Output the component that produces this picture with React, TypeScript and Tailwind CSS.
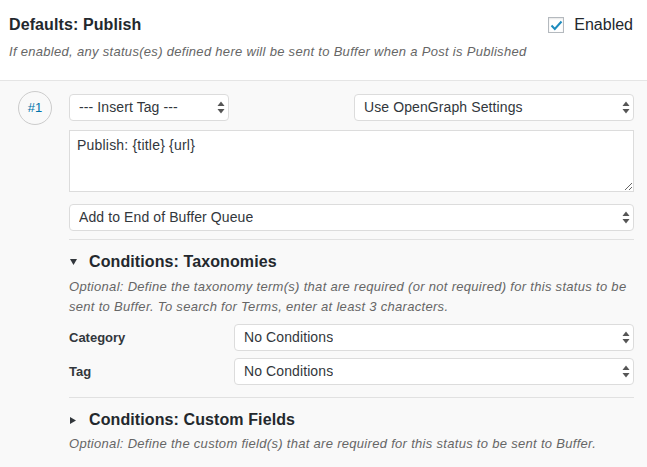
import type { JSX } from 'react';

function SelectArrows(): JSX.Element {
  return (
    <svg width="8" height="13" viewBox="0 0 8 13" className="shrink-0">
      <path d="M4 0.5 L7.5 5 L0.5 5 Z" fill="#555" />
      <path d="M4 12.5 L7.5 8 L0.5 8 Z" fill="#555" />
    </svg>
  );
}

function FakeSelect({ value, className }: { value: string; className?: string }): JSX.Element {
  return (
    <div
      className={`h-[27px] flex items-center justify-between bg-white border border-[#dcdcdc] rounded-[4px] pl-[9px] pr-[3px] text-[14px] text-[#32373c] ${className ?? ''}`}
    >
      <span className="truncate tracking-[0.1px]">{value}</span>
      <SelectArrows />
    </div>
  );
}

function SectionHeading({ open, title }: { open: boolean; title: string }): JSX.Element {
  return (
    <div className="h-[22px] flex items-center">
      <span className="w-[20px] flex items-center pl-[1px]">
        {open ? (
          <svg width="7" height="6" viewBox="0 0 7 6">
            <path d="M0 0 L7 0 L3.5 6 Z" fill="#32373c" />
          </svg>
        ) : (
          <svg width="6" height="7" viewBox="0 0 6 7">
            <path d="M0 0 L6 3.5 L0 7 Z" fill="#32373c" />
          </svg>
        )}
      </span>
      <h3 className="text-[16px] font-bold text-[#23282d] tracking-[0.1px]">{title}</h3>
    </div>
  );
}

export default function App(): JSX.Element {
  return (
    <div className="w-[647px] h-[467px] overflow-hidden bg-white font-['Liberation_Sans',Arial,sans-serif] text-[#23282d]">
      <div className="pl-[9px] pr-[14px] pt-[14px] pb-[19px] border-b border-[#e5e5e5]">
        <div className="h-[22px] flex items-center justify-between">
          <h2 className="text-[16px] font-bold tracking-[0.1px]">Defaults: Publish</h2>
          <label className="flex items-center gap-[10px] text-[16px] text-[#23282d]">
            <span className="w-[16px] h-[16px] border border-[#b4b9be] bg-white flex items-center justify-center shadow-[inset_0_1px_2px_rgba(0,0,0,0.1)]">
              <svg width="13" height="11" viewBox="0 0 13 11">
                <path d="M1.5 5.5 L4.8 9 L11.5 1.5" stroke="#1e8cbe" strokeWidth="2" fill="none" />
              </svg>
            </span>
            Enabled
          </label>
        </div>
        <p className="mt-[7px] text-[13px] leading-[18px] italic text-[#666] tracking-[0.3px]">
          If enabled, any status(es) defined here will be sent to Buffer when a Post is Published
        </p>
      </div>

      <div className="flex bg-[#f9f9f9] h-full">
        <div className="w-[69px] shrink-0 pt-[10px] pl-[18px]">
          <div className="w-[34px] h-[34px] rounded-full border border-[#ccc] flex items-center justify-center text-[13px] text-[#0073aa]">
            #1
          </div>
        </div>

        <div className="w-[565px] pt-[13px]">
          <div className="flex justify-between">
            <FakeSelect value="--- Insert Tag ---" className="w-[160px]" />
            <FakeSelect value="Use OpenGraph Settings" className="w-[280px]" />
          </div>

          <textarea
            readOnly
            defaultValue="Publish: {title} {url}"
            className="mt-[9px] block w-full h-[62px] bg-white border border-[#dcdcdc] px-[7px] py-[4px] text-[14px] leading-[20px] tracking-[0.2px] text-[#32373c] outline-none"
          />

          <FakeSelect value="Add to End of Buffer Queue" className="mt-[12px] w-full" />

          <div className="mt-[8px] border-t border-[#e1e1e1]" />

          <div className="mt-[11px]">
            <SectionHeading open={true} title="Conditions: Taxonomies" />
          </div>
          <p className="mt-[4px] text-[13px] leading-[20px] italic text-[#666] tracking-[0.3px]">
            Optional: Define the taxonomy term(s) that are required (or not required) for this status to be sent to Buffer. To search for Terms, enter at least 3 characters.
          </p>

          <div className="mt-[7px] flex items-center">
            <span className="w-[165px] shrink-0 text-[13px] font-bold text-[#32373c]">Category</span>
            <FakeSelect value="No Conditions" className="flex-1" />
          </div>
          <div className="mt-[7px] flex items-center">
            <span className="w-[165px] shrink-0 text-[13px] font-bold text-[#32373c]">Tag</span>
            <FakeSelect value="No Conditions" className="flex-1" />
          </div>

          <div className="mt-[12px] border-t border-[#e1e1e1]" />

          <div className="mt-[11px]">
            <SectionHeading open={false} title="Conditions: Custom Fields" />
          </div>
          <p className="mt-[3px] text-[13px] leading-[20px] italic text-[#666] tracking-[0.3px]">
            Optional: Define the custom field(s) that are required for this status to be sent to Buffer.
          </p>
        </div>
      </div>
    </div>
  );
}
